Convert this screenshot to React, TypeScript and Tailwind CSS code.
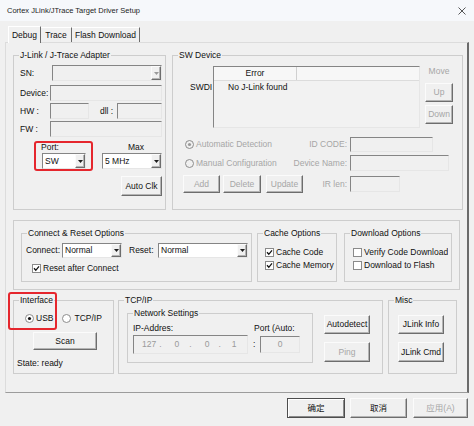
import type { ReactNode } from "react";

const sunken =
  "border border-t-[#858585] border-l-[#858585] border-r-[#e6e6e6] border-b-[#e6e6e6]";
const raised =
  "border border-t-[#fbfbfb] border-l-[#fbfbfb] border-r-[#6d6d6d] border-b-[#6d6d6d] shadow-[inset_-1px_-1px_0_#b4b4b4] bg-[#f0f0f0]";

function Arrow({ dim }: { dim?: boolean }) {
  return (
    <svg width="5" height="3" viewBox="0 0 5 3">
      <path d="M0 0h5L2.5 3z" fill={dim ? "#9a9a9a" : "#1e1e1e"} />
    </svg>
  );
}

function Combo({
  className,
  value,
  white,
}: {
  className: string;
  value?: string;
  white?: boolean;
}) {
  return (
    <div className={`${sunken} ${white ? "bg-white" : "bg-[#f0f0f0]"} flex ${className}`}>
      <span className="flex-1 pl-[2px] flex items-center overflow-hidden whitespace-nowrap">
        {value}
      </span>
      <span className={`${raised} w-[10px] flex items-center justify-center`}>
        <Arrow dim={!white} />
      </span>
    </div>
  );
}

function Edit({ className, children }: { className: string; children?: ReactNode }) {
  return <div className={`${sunken} bg-[#f0f0f0] ${className}`}>{children}</div>;
}

function Btn({
  className,
  children,
  disabled,
}: {
  className: string;
  children: ReactNode;
  disabled?: boolean;
}) {
  return (
    <button
      type="button"
      className={`${raised} flex items-center justify-center leading-[11px] ${
        disabled ? "text-[#a6a6a6]" : "text-[#111]"
      } ${className}`}
    >
      {children}
    </button>
  );
}

function Radio({ on, dim }: { on?: boolean; dim?: boolean }) {
  return (
    <svg width="9" height="9" viewBox="0 0 9 9" className="shrink-0">
      <circle cx="4.5" cy="4.5" r="4" fill={dim ? "#f0f0f0" : "#fff"} stroke="#8c8c8c" />
      {on && <circle cx="4.5" cy="4.5" r="1.6" fill={dim ? "#9a9a9a" : "#111"} />}
    </svg>
  );
}

function Check({ on }: { on?: boolean }) {
  return (
    <svg width="9" height="9" viewBox="0 0 9 9" className="shrink-0">
      <rect x="0.5" y="0.5" width="8" height="8" fill="#fff" stroke="#8a8a8a" />
      {on && <path d="M2 4.3l1.8 2L7 2.4" fill="none" stroke="#111" strokeWidth="1.3" />}
    </svg>
  );
}

function Group({
  title,
  className,
  children,
}: {
  title: string;
  className: string;
  children?: ReactNode;
}) {
  return (
    <fieldset className={`border border-[#cdcdcd] shrink-0 ${className}`}>
      <legend className="ml-[5px] px-[1px] leading-[11px] text-[#111]">{title}</legend>
      {children}
    </fieldset>
  );
}

export default function App() {
  return (
    <div className="w-[474px] h-[426px] bg-[#f0f0f0] flex flex-col overflow-hidden font-['Liberation_Sans','Noto_Sans_CJK_SC',sans-serif] text-[8.5px] leading-[11px] text-[#111]">
      {/* title bar */}
      <div className="h-[21px] shrink-0 flex items-center justify-between pl-[7px] pr-[8px] bg-[#f6f8fb]">
        <span className="text-[7.5px] text-[#1c1c1c]">Cortex JLink/JTrace Target Driver Setup</span>
        <svg width="8" height="8" viewBox="0 0 8 8">
          <path d="M0.5 0.5l7 7M7.5 0.5l-7 7" stroke="#444" strokeWidth="0.9" />
        </svg>
      </div>

      {/* tabs */}
      <div className="h-[21px] shrink-0 flex items-end pl-[8px]">
        <div className="relative z-10 -mb-px h-[17px] w-[33px] bg-[#f0f0f0] border-l border-t border-l-white border-t-white border-r border-r-[#6b6b6b] flex items-center justify-center">
          Debug
        </div>
        <div className="h-[15px] w-[31px] border-t border-t-white border-r border-r-[#6b6b6b] flex items-center justify-center">
          Trace
        </div>
        <div className="h-[15px] w-[68px] border-t border-t-white border-r border-r-[#6b6b6b] flex items-center justify-center">
          Flash Download
        </div>
      </div>

      {/* tab panel */}
      <div className="ml-[5px] w-[464px] h-[351px] shrink-0 border-l border-t border-l-[#dcdcdc] border-t-[#dcdcdc] border-r-2 border-r-[#6b6b6b] border-b border-b-[#9c9c9c] flex flex-col">
        {/* row 1 */}
        <div className="flex mt-[7px] ml-[7px]">
          <Group title="J-Link / J-Trace Adapter" className="w-[153px] h-[160px]">
            <div className="flex flex-col pl-[6px]">
              <div className="flex items-center mt-[4px] h-[16px]">
                <span className="w-[32px]">SN:</span>
                <Combo className="w-[110px] h-[16px]" />
              </div>
              <div className="flex items-center mt-[4px] h-[16px]">
                <span className="w-[30px]">Device:</span>
                <Edit className="w-[112px] h-[16px]" />
              </div>
              <div className="flex items-center mt-[2px] h-[16px]">
                <span className="w-[30px]">HW :</span>
                <Edit className="w-[39px] h-[16px]" />
                <span className="ml-[11px] w-[17px]">dll :</span>
                <Edit className="w-[45px] h-[16px]" />
              </div>
              <div className="flex items-center mt-[2px] h-[16px]">
                <span className="w-[30px]">FW :</span>
                <Edit className="w-[112px] h-[16px]" />
              </div>
              <div className="relative mt-[5px]">
                <div className="flex h-[11px]">
                  <span className="ml-[21px] w-[87px]">Port:</span>
                  <span>Max</span>
                </div>
                <div className="flex">
                  <Combo white value="SW" className="ml-[22px] w-[44px] h-[16px]" />
                  <Combo white value="5 MHz" className="ml-[16px] w-[60px] h-[16px]" />
                </div>
                <div className="absolute left-[14px] -top-px w-[59px] h-[30px] border-2 border-[#e5262d] rounded-[3px]" />
              </div>
              <div className="flex justify-end mt-[7px] pr-[3px]">
                <Btn className="w-[41px] h-[20px]">Auto Clk</Btn>
              </div>
            </div>
          </Group>

          <Group title="SW Device" className="ml-[6px] w-[291px] h-[160px]">
            <div className="flex mt-[5px]">
              <span className="ml-[17px] w-[23px] mt-[16px] overflow-hidden whitespace-nowrap">SWDI</span>
              <div className={`${sunken} w-[207px] h-[62px] bg-[#f2f2f2] flex flex-col`}>
                <div className="h-[14px] shrink-0 flex border-b border-b-[#dcdcdc] bg-[#f7f7f7]">
                  <div className="w-[83px] border-r border-r-[#d0d0d0] flex items-center justify-center">
                    Error
                  </div>
                </div>
                <div className="pl-[14px] mt-[1px]">No J-Link found</div>
              </div>
              <div className="ml-[5px] w-[28px] flex flex-col">
                <span className="text-[#a6a6a6] text-center">Move</span>
                <Btn disabled className="mt-[6px] h-[19px]">
                  Up
                </Btn>
                <Btn disabled className="mt-[3px] h-[19px]">
                  Down
                </Btn>
              </div>
            </div>

            <div className="flex items-center mt-[9px] h-[15px] text-[#a6a6a6]">
              <div className="w-[118px] pl-[12px] flex items-center">
                <Radio on dim />
                <span className="ml-[2px]">Automatic Detection</span>
              </div>
              <span className="w-[56px] text-right">ID CODE:</span>
              <Edit className="ml-[3px] w-[83px] h-[15px]" />
            </div>
            <div className="flex items-center mt-[3px] h-[16px] text-[#a6a6a6]">
              <div className="w-[118px] pl-[12px] flex items-center">
                <Radio dim />
                <span className="ml-[2px]">Manual Configuration</span>
              </div>
              <span className="w-[56px] text-right whitespace-nowrap">Device Name:</span>
              <Edit className="ml-[3px] w-[99px] h-[16px]" />
            </div>
            <div className="flex items-center mt-[4px] text-[#a6a6a6]">
              <Btn disabled className="ml-[10px] w-[37px] h-[18px]">
                Add
              </Btn>
              <Btn disabled className="ml-[3px] w-[38px] h-[18px]">
                Delete
              </Btn>
              <Btn disabled className="ml-[5px] w-[37px] h-[18px]">
                Update
              </Btn>
              <span className="w-[44px] text-right">IR len:</span>
              <Edit className="ml-[3px] w-[50px] h-[16px]" />
            </div>
          </Group>
        </div>

        {/* row 2 */}
        <div className="mt-[10px] ml-[7px] w-[447px] h-[70px] shrink-0 border border-[#cdcdcd] flex items-start pt-[7px] pl-[7px]">
          <Group title="Connect & Reset Options" className="w-[231px] h-[54px]">
            <div className="flex items-center mt-[4px]">
              <span className="ml-[4px] w-[36px]">Connect:</span>
              <Combo white value="Normal" className="w-[60px] h-[15px]" />
              <span className="ml-[7px] w-[29px]">Reset:</span>
              <Combo white value="Normal" className="w-[90px] h-[15px]" />
            </div>
            <div className="flex items-center mt-[5px] ml-[10px] h-[11px]">
              <Check on />
              <span className="ml-[2px]">Reset after Connect</span>
            </div>
          </Group>
          <Group title="Cache Options" className="ml-[5px] w-[80px] h-[54px]">
            <div className="flex items-center mt-[8px] pl-[7px] h-[11px]">
              <Check on />
              <span className="ml-[2px]">Cache Code</span>
            </div>
            <div className="flex items-center mt-[2px] pl-[7px] h-[11px]">
              <Check on />
              <span className="ml-[2px] whitespace-nowrap">Cache Memory</span>
            </div>
          </Group>
          <Group title="Download Options" className="ml-[7px] w-[108px] h-[54px]">
            <div className="flex items-center mt-[8px] pl-[8px] h-[11px] w-[103px] overflow-hidden whitespace-nowrap">
              <Check />
              <span className="ml-[2px]">Verify Code Download</span>
            </div>
            <div className="flex items-center mt-[2px] pl-[8px] h-[11px] whitespace-nowrap">
              <Check />
              <span className="ml-[2px]">Download to Flash</span>
            </div>
          </Group>
        </div>

        {/* row 3 */}
        <div className="flex mt-[5px] ml-[7px]">
          <Group title="Interface" className="w-[101px] h-[79px]">
            <div className="relative flex items-center mt-[7px] pl-[11px] h-[11px]">
              <Radio on />
              <span className="ml-[2px]">USB</span>
              <span className="ml-[9px]">
                <Radio />
              </span>
              <span className="ml-[3px]">TCP/IP</span>
              <div className="absolute -left-[6px] -top-[21px] w-[49px] h-[38px] border-2 border-[#e5262d] rounded-[3px]" />
            </div>
            <Btn className="mt-[8px] ml-[19px] w-[64px] h-[18px]">Scan</Btn>
            <div className="mt-[8px] pl-[3px]">State: ready</div>
          </Group>

          <Group title="TCP/IP" className="ml-[4px] w-[265px] h-[79px]">
            <div className="flex items-start">
              <Group title="Network Settings" className="ml-[8px] mt-[2px] w-[186px] h-[55px]">
                <div className="flex mt-[4px] h-[11px]">
                  <span className="ml-[5px] w-[121px]">IP-Addres:</span>
                  <span>Port (Auto:</span>
                </div>
                <div className="flex items-center mt-[1px]">
                  <Edit className="ml-[5px] w-[115px] h-[19px] flex items-center text-[#9a9a9a]">
                    <span className="ml-[8px]">127</span>
                    <span className="ml-[3px]">.</span>
                    <span className="ml-[13px]">0</span>
                    <span className="ml-[10px]">.</span>
                    <span className="ml-[13px]">0</span>
                    <span className="ml-[9px]">.</span>
                    <span className="ml-[11px]">1</span>
                  </Edit>
                  <span className="ml-[5px] w-[3px]">:</span>
                  <Edit className="ml-[4px] w-[40px] h-[17px] flex items-center justify-center text-[#9a9a9a]">
                    0
                  </Edit>
                </div>
              </Group>
              <div className="ml-[11px] flex flex-col">
                <Btn className="mt-[9px] w-[46px] h-[19px]">Autodetect</Btn>
                <Btn disabled className="mt-[8px] w-[46px] h-[20px]">
                  Ping
                </Btn>
              </div>
            </div>
          </Group>

          <Group title="Misc" className="ml-[5px] w-[69px] h-[79px]">
            <div className="flex flex-col pl-[9px]">
              <Btn className="mt-[9px] w-[46px] h-[19px]">JLink Info</Btn>
              <Btn className="mt-[8px] w-[46px] h-[20px]">JLink Cmd</Btn>
            </div>
          </Group>
        </div>
      </div>

      {/* dialog buttons */}
      <div className="flex justify-end mt-[5px] pr-[6px]">
        <button
          type="button"
          className="w-[58px] h-[20px] bg-[#f0f0f0] border border-[#4d4d4d] shadow-[inset_1px_1px_0_#fff,inset_-1px_-1px_0_#8a8a8a] flex items-center justify-center"
        >
          确定
        </button>
        <Btn className="ml-[5px] w-[57px] h-[20px]">取消</Btn>
        <Btn disabled className="ml-[6px] w-[55px] h-[20px]">
          应用(A)
        </Btn>
      </div>
    </div>
  );
}
